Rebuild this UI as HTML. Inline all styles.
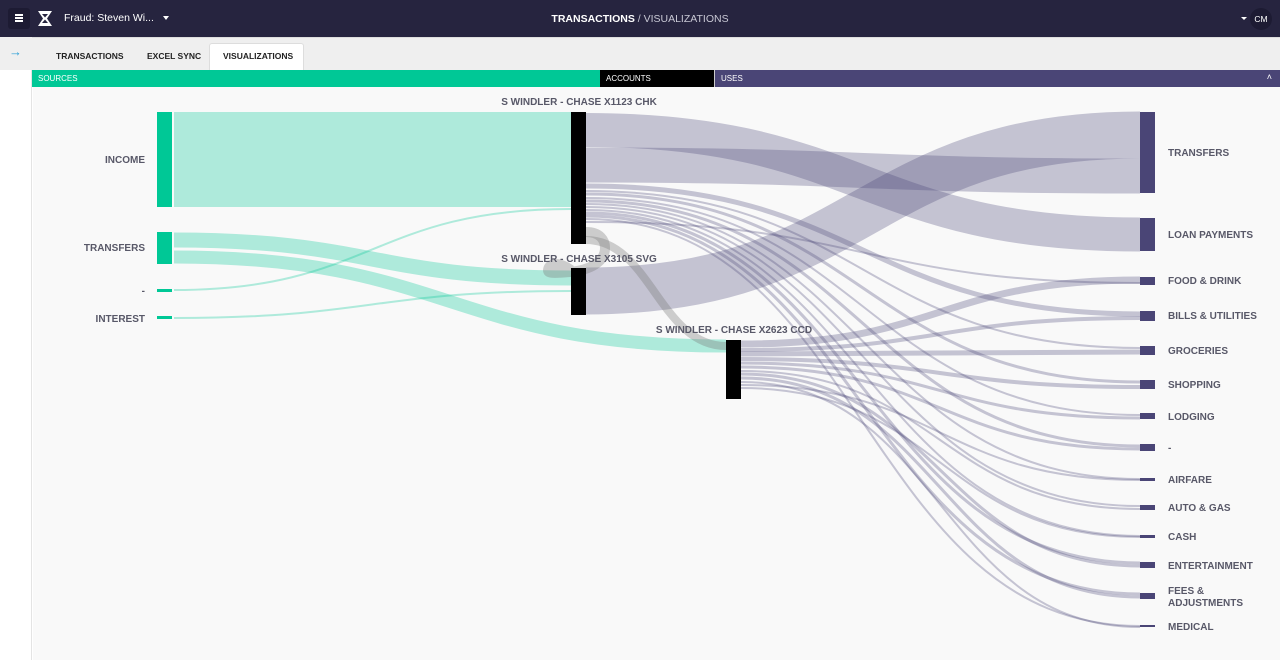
<!DOCTYPE html>
<html><head><meta charset="utf-8"><style>
*{margin:0;padding:0;box-sizing:border-box}
body{width:1280px;height:660px;overflow:hidden;background:#fff;font-family:"Liberation Sans",sans-serif;position:relative}
.hdr{position:absolute;left:0;top:0;width:1280px;height:37px;background:#26243f}
.tabs{position:absolute;left:32px;top:37px;width:1248px;height:33px;background:#efefef;border-top:1px solid #ddd}
.tab{position:absolute;top:13px;font-size:8.5px;font-weight:bold;color:#222}
.side{position:absolute;left:0;top:37px;width:32px;height:623px;background:#fff;border-right:1px solid #e4e4e4}
.sideTop{position:absolute;left:0;top:37px;width:32px;height:33px;background:#efefef}
.bar{position:absolute;top:70px;height:17px;font-size:8px;color:#fff;padding:4px 0 0 6px}
svg{position:absolute;left:0;top:0}
</style></head><body>
<div class="hdr">
 <div style="position:absolute;left:8px;top:8px;width:22px;height:21px;background:#1d1b33;border-radius:3px"></div>
 <div style="position:absolute;left:15px;top:14px;width:8px;height:2px;background:#fff;box-shadow:0 3px 0 #fff,0 6px 0 #fff"></div>
 <svg width="20" height="20" style="left:36px;top:9px" viewBox="0 0 20 20"><path d="M2 2H16L11 9.5 16 17H2L7 9.5Z" fill="#fff"/><path d="M6 5H12L9 8.5Z M6 14H12L9 10.5Z" fill="#26243f"/></svg>
 <div style="position:absolute;left:64px;top:12px;color:#fff;font-size:10.5px">Fraud: Steven Wi...</div>
 <div style="position:absolute;left:163px;top:16px;border:3px solid transparent;border-top:4px solid #fff"></div>
 <div style="position:absolute;left:0;width:1280px;top:13px;text-align:center;color:#fff;font-size:10.5px"><b>TRANSACTIONS</b> <span style="color:#c8c8d4">/ VISUALIZATIONS</span></div>
 <div style="position:absolute;left:1241px;top:17px;border:3px solid transparent;border-top:3px solid #fff"></div>
 <div style="position:absolute;left:1250px;top:8px;width:22px;height:22px;border-radius:50%;background:#1d1b33;color:#fff;font-size:8.5px;text-align:center;line-height:22px">CM</div>
</div>
<div class="side"></div><div class="sideTop"></div>
<div style="position:absolute;left:9px;top:44px;color:#2b9fd6;font-size:13px;font-weight:bold">→</div>
<div class="tabs">
 <div class="tab" style="left:24px">TRANSACTIONS</div>
 <div class="tab" style="left:115px">EXCEL SYNC</div>
 <div style="position:absolute;left:177px;top:5px;width:95px;height:28px;background:#fff;border:1px solid #ddd;border-bottom:none;border-radius:3px 3px 0 0"></div>
 <div class="tab" style="left:191px">VISUALIZATIONS</div>
</div>
<div class="bar" style="left:32px;width:568px;background:#00c896">SOURCES</div>
<div class="bar" style="left:600px;width:114px;background:#000">ACCOUNTS</div>
<div class="bar" style="left:714px;width:566px;background:#4a4576;border-left:1px solid #ccc">USES<span style="position:absolute;right:8px;top:2px;font-size:9px">˄</span></div>
<div style="position:absolute;left:33px;top:87px;width:1247px;height:573px;background:#f9f9f9"></div>
<svg width="1280" height="660" font-family="Liberation Sans, sans-serif" font-weight="bold" font-size="10" fill="#585868">
<g fill="none" stroke="#00c896" stroke-opacity="0.3">
 <path d="M174 159.5H571" stroke-width="95"/>
 <path d="M174 240C372 240 372 278 571 278" stroke-width="15"/>
 <path d="M174 257C450 257 450 346 726 346" stroke-width="13"/>
 <path d="M174 290C372 290 372 209 571 209" stroke-width="2"/>
 <path d="M174 318C372 318 372 291 571 291" stroke-width="2"/>
</g>
<g fill="none" stroke="#4a4576" stroke-opacity="0.3">
 <path d="M586 130C863 130 863 234.5 1140 234.5" stroke-width="34"/>
 <path d="M586 165C863 165 863 176 1140 176" stroke-width="35"/>
 <path d="M586 291C863 291 863 135 1140 135" stroke-width="47"/>
 <path d="M586 186C863 186 863 314 1140 314" stroke-width="5"/>
 <path d="M586 191C863 191 863 348 1140 348" stroke-width="2"/>
 <path d="M586 194C863 194 863 382 1140 382" stroke-width="3"/>
 <path d="M586 198C863 198 863 415 1140 415" stroke-width="2"/>
 <path d="M586 201C863 201 863 446 1140 446" stroke-width="3"/>
 <path d="M586 204C863 204 863 479 1140 479" stroke-width="2"/>
 <path d="M586 207C863 207 863 506 1140 506" stroke-width="2"/>
 <path d="M586 210C863 210 863 536 1140 536" stroke-width="2"/>
 <path d="M586 213C863 213 863 563 1140 563" stroke-width="3"/>
 <path d="M586 216C863 216 863 594 1140 594" stroke-width="3"/>
 <path d="M586 219C863 219 863 626 1140 626" stroke-width="2"/>
 <path d="M586 222C863 222 863 283 1140 283" stroke-width="2"/>
 <path d="M741 344C940 344 940 280 1140 280" stroke-width="7"/>
 <path d="M741 350C940 350 940 318 1140 318" stroke-width="4"/>
 <path d="M741 354C940 354 940 352 1140 352" stroke-width="5"/>
 <path d="M741 359C940 359 940 387 1140 387" stroke-width="4"/>
 <path d="M741 363C940 363 940 418 1140 418" stroke-width="3"/>
 <path d="M741 367C940 367 940 449 1140 449" stroke-width="3"/>
 <path d="M741 371C940 371 940 509 1140 509" stroke-width="2"/>
 <path d="M741 374C940 374 940 566 1140 566" stroke-width="3"/>
 <path d="M741 378C940 378 940 597 1140 597" stroke-width="3"/>
 <path d="M741 382C940 382 940 627 1140 627" stroke-width="2"/>
 <path d="M741 385C940 385 940 480 1140 480" stroke-width="2"/>
 <path d="M741 388C940 388 940 537 1140 537" stroke-width="2"/>
</g>
<g fill="none" stroke="#777" stroke-opacity="0.35">
 <path d="M586 232C600 232 605 240 605 248C605 262 590 270 570 272C555 273 548 274 548 270C549 262 560 262 571 270" stroke-width="10"/>
 <path d="M586 240C650 240 660 346 726 346" stroke-width="8"/>
</g>
<g fill="#00c896">
 <rect x="157" y="112" width="15" height="95"/><rect x="157" y="232" width="15" height="32"/>
 <rect x="157" y="289" width="15" height="3"/><rect x="157" y="316" width="15" height="3"/>
</g>
<g fill="#000">
 <rect x="571" y="112" width="15" height="132"/><rect x="571" y="268" width="15" height="47"/><rect x="726" y="340" width="15" height="59"/>
</g>
<g fill="#4a4576">
 <rect x="1140" y="112" width="15" height="81"/><rect x="1140" y="218" width="15" height="33"/>
 <rect x="1140" y="277" width="15" height="8"/><rect x="1140" y="311" width="15" height="10"/>
 <rect x="1140" y="346" width="15" height="9"/><rect x="1140" y="380" width="15" height="9"/>
 <rect x="1140" y="413" width="15" height="6"/><rect x="1140" y="444" width="15" height="7"/>
 <rect x="1140" y="478" width="15" height="3"/><rect x="1140" y="505" width="15" height="5"/>
 <rect x="1140" y="535" width="15" height="3"/><rect x="1140" y="562" width="15" height="6"/>
 <rect x="1140" y="593" width="15" height="6"/><rect x="1140" y="625" width="15" height="2"/>
</g>
<g text-anchor="end">
 <text x="145" y="163">INCOME</text><text x="145" y="251">TRANSFERS</text>
 <text x="145" y="294">-</text><text x="145" y="322">INTEREST</text>
</g>
<g text-anchor="middle">
 <text x="579" y="105">S WINDLER - CHASE X1123 CHK</text>
 <text x="579" y="262">S WINDLER - CHASE X3105 SVG</text>
 <text x="734" y="333">S WINDLER - CHASE X2623 CCD</text>
</g>
<g>
 <text x="1168" y="156">TRANSFERS</text><text x="1168" y="238">LOAN PAYMENTS</text>
 <text x="1168" y="284">FOOD &amp; DRINK</text><text x="1168" y="319">BILLS &amp; UTILITIES</text>
 <text x="1168" y="354">GROCERIES</text><text x="1168" y="388">SHOPPING</text>
 <text x="1168" y="420">LODGING</text><text x="1168" y="451">-</text>
 <text x="1168" y="483">AIRFARE</text><text x="1168" y="511">AUTO &amp; GAS</text>
 <text x="1168" y="540">CASH</text><text x="1168" y="569">ENTERTAINMENT</text>
 <text x="1168" y="594">FEES &amp;</text><text x="1168" y="606">ADJUSTMENTS</text>
 <text x="1168" y="630">MEDICAL</text>
</g>
</svg>
</body></html>
